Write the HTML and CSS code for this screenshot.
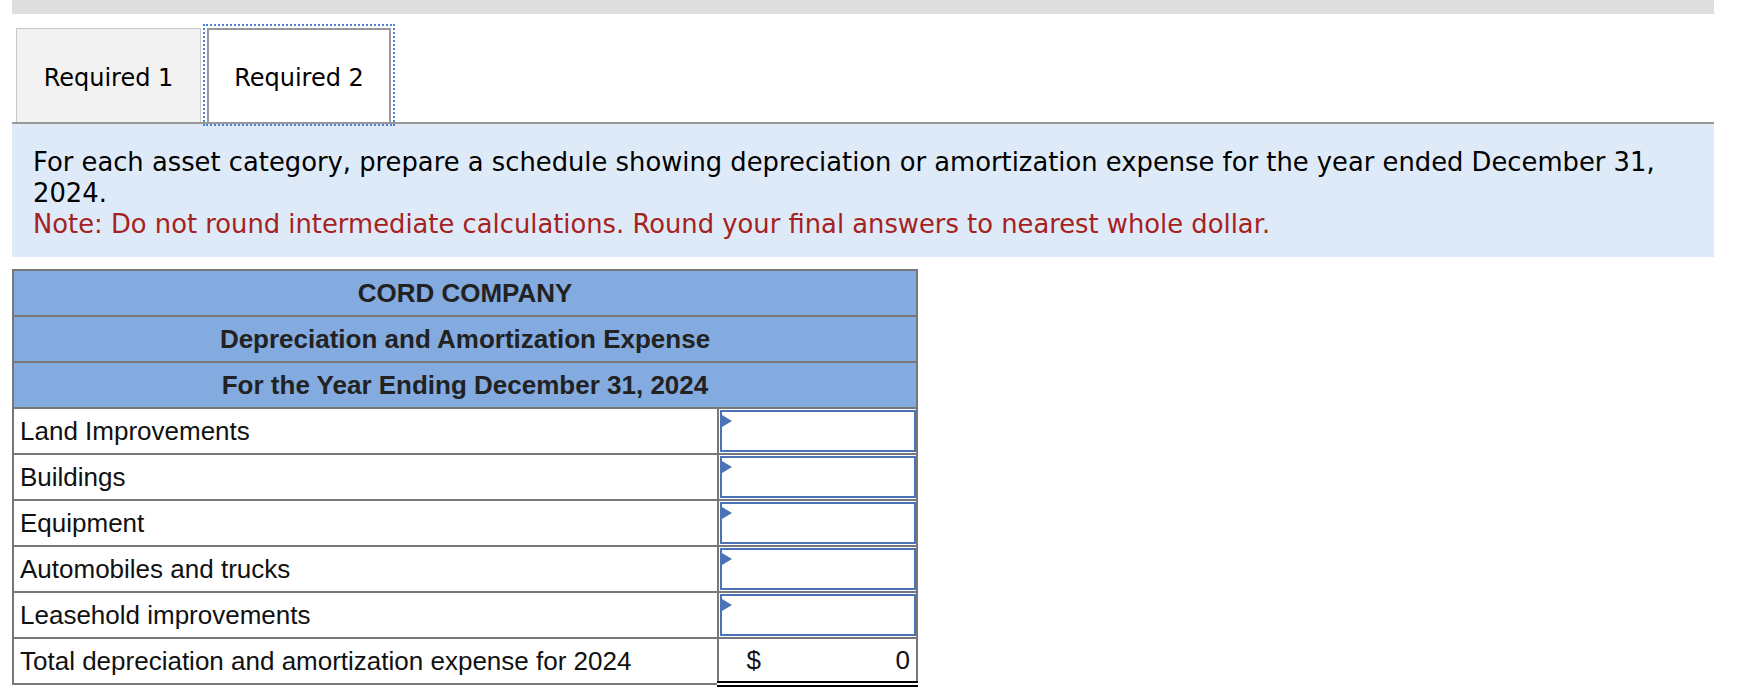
FILE: index.html
```html
<!DOCTYPE html>
<html>
<head>
<meta charset="utf-8">
<link rel="stylesheet" href="styles.css">
</head>
<body>
<div class="page">
  <div class="topbar"></div>
  <div class="tabs">
    <div class="tab">Required 1</div>
    <div class="tab active">Required 2</div>
  </div>
  <div class="instructions">
    <p class="question">For each asset category, prepare a schedule showing depreciation or amortization expense for the year ended December 31, 2024.</p>
    <p class="note">Note: Do not round intermediate calculations. Round your final answers to nearest whole dollar.</p>
  </div>
  <table class="schedule">
    <tr class="head"><th colspan="2">CORD COMPANY</th></tr>
    <tr class="head"><th colspan="2">Depreciation and Amortization Expense</th></tr>
    <tr class="head"><th colspan="2">For the Year Ending December 31, 2024</th></tr>
    <tr><td class="label">Land Improvements</td><td class="input"><div class="box"></div></td></tr>
    <tr><td class="label">Buildings</td><td class="input"><div class="box"></div></td></tr>
    <tr><td class="label">Equipment</td><td class="input"><div class="box"></div></td></tr>
    <tr><td class="label">Automobiles and trucks</td><td class="input"><div class="box"></div></td></tr>
    <tr><td class="label">Leasehold improvements</td><td class="input"><div class="box"></div></td></tr>
    <tr class="total"><td class="label">Total depreciation and amortization expense for 2024</td><td class="sum"><span class="dollar">$</span><span class="amt">0</span></td></tr>
  </table>
</div>
</body>
</html>
```
FILE: styles.css
```css
html, body {
  margin: 0;
  padding: 0;
  background: #ffffff;
}
.page {
  margin-left: 12px;
  width: 1702px;
  font-family: "DejaVu Sans", Verdana, sans-serif;
  color: #000;
}
.topbar {
  height: 14px;
  background: #dedede;
}
.tabs {
  display: flex;
  align-items: flex-end;
  padding-left: 4px;
  border-bottom: 2px solid #999;
  box-sizing: border-box;
  height: 110px;
}
.tab {
  box-sizing: border-box;
  height: 94px;
  width: 185px;
  padding-top: 4px;
  display: flex;
  align-items: center;
  justify-content: center;
  font-size: 24px;
  background: #f2f2f2;
  border: 1px solid #c8c8c8;
  border-bottom: none;
}
.tab.active {
  background: #fff;
  border: 2px solid #999;
  border-bottom: none;
  margin-left: 6px;
  width: 184px;
  outline: 2px dotted #4f82d4;
  outline-offset: 2px;
}
.instructions {
  background: #deeaf7;
  padding: 23px 0 14px 21px;
  height: 133px;
  box-sizing: border-box;
}
.instructions p {
  margin: 0;
  font-size: 25.8px;
  line-height: 31px;
}
.note {
  color: #a62121;
}
.schedule {
  margin-top: 12px;
  border-collapse: collapse;
  width: 906px;
  font-family: "Liberation Sans", Arial, sans-serif;
  font-size: 26px;
  color: #222;
}
.schedule th, .schedule td {
  border: 2px solid #777;
  height: 46px;
  padding: 0;
  box-sizing: border-box;
}
.schedule th {
  background: #84abe0;
  font-weight: bold;
  text-align: center;
}
.label {
  padding-left: 6px !important;
  width: 707px;
  text-align: left;
  color: #111;
}
.input {
  width: 199px;
  padding: 1px 0 1px 1px !important;
  vertical-align: top;
}
.box {
  position: relative;
  box-sizing: border-box;
  height: 42px;
  border: 2px solid #4a74b6;
  background: #fff;
}
.box::before {
  content: "";
  position: absolute;
  left: 0;
  top: 3px;
  border-top: 6px solid transparent;
  border-bottom: 6px solid transparent;
  border-left: 10px solid #4a74b6;
}
.sum {
  border-top: 2px solid #000 !important;
  border-bottom: 6px double #000 !important;
  padding: 0 6px 0 27px !important;
}
.sum .dollar {
  float: left;
  color: #111;
}
.sum .amt {
  float: right;
  color: #111;
}
```
